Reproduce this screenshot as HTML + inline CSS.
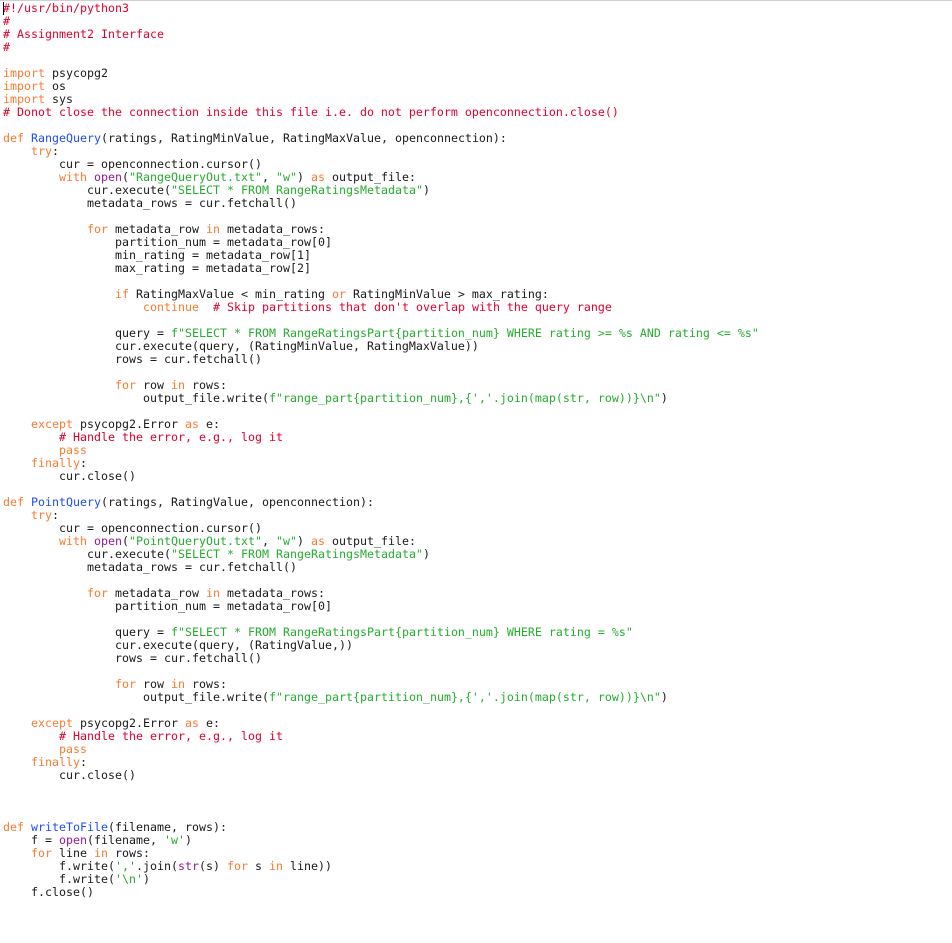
<!DOCTYPE html>
<html><head><meta charset="utf-8">
<style>
html,body{margin:0;padding:0;background:#fff;width:952px;height:943px;overflow:hidden}
#top{position:absolute;left:0;top:0;width:952px;height:1px;background:#d0d0d0}
#cur{position:absolute;left:3px;top:2px;width:1px;height:13px;background:#000}
pre{position:absolute;left:3px;top:2px;margin:0;font-family:"DejaVu Sans Mono","Liberation Mono",monospace;font-size:11.63px;line-height:13px;color:#1a1a1a;-webkit-font-smoothing:antialiased}
.c{color:#e3002c}.k{color:#fb7a30}.b{color:#96199a}.s{color:#25ad2f}.f{color:#1f4cf5}
</style></head><body>
<div id="top"></div>
<pre><span class="c">#!/usr/bin/python3
#
# Assignment2 Interface
#</span>

<span class="k">import</span> psycopg2
<span class="k">import</span> os
<span class="k">import</span> sys
<span class="c"># Donot close the connection inside this file i.e. do not perform openconnection.close()</span>

<span class="k">def</span> <span class="f">RangeQuery</span>(ratings, RatingMinValue, RatingMaxValue, openconnection):
    <span class="k">try</span>:
        cur = openconnection.cursor()
        <span class="k">with</span> <span class="b">open</span>(<span class="s">"RangeQueryOut.txt"</span>, <span class="s">"w"</span>) <span class="k">as</span> output_file:
            cur.execute(<span class="s">"SELECT * FROM RangeRatingsMetadata"</span>)
            metadata_rows = cur.fetchall()

            <span class="k">for</span> metadata_row <span class="k">in</span> metadata_rows:
                partition_num = metadata_row[0]
                min_rating = metadata_row[1]
                max_rating = metadata_row[2]

                <span class="k">if</span> RatingMaxValue &lt; min_rating <span class="k">or</span> RatingMinValue &gt; max_rating:
                    <span class="k">continue</span>  <span class="c"># Skip partitions that don't overlap with the query range</span>

                query = <span class="s">f"SELECT * FROM RangeRatingsPart{partition_num} WHERE rating &gt;= %s AND rating &lt;= %s"</span>
                cur.execute(query, (RatingMinValue, RatingMaxValue))
                rows = cur.fetchall()

                <span class="k">for</span> row <span class="k">in</span> rows:
                    output_file.write(<span class="s">f"range_part{partition_num},{','.join(map(str, row))}\n"</span>)

    <span class="k">except</span> psycopg2.Error <span class="k">as</span> e:
        <span class="c"># Handle the error, e.g., log it</span>
        <span class="k">pass</span>
    <span class="k">finally</span>:
        cur.close()

<span class="k">def</span> <span class="f">PointQuery</span>(ratings, RatingValue, openconnection):
    <span class="k">try</span>:
        cur = openconnection.cursor()
        <span class="k">with</span> <span class="b">open</span>(<span class="s">"PointQueryOut.txt"</span>, <span class="s">"w"</span>) <span class="k">as</span> output_file:
            cur.execute(<span class="s">"SELECT * FROM RangeRatingsMetadata"</span>)
            metadata_rows = cur.fetchall()

            <span class="k">for</span> metadata_row <span class="k">in</span> metadata_rows:
                partition_num = metadata_row[0]

                query = <span class="s">f"SELECT * FROM RangeRatingsPart{partition_num} WHERE rating = %s"</span>
                cur.execute(query, (RatingValue,))
                rows = cur.fetchall()

                <span class="k">for</span> row <span class="k">in</span> rows:
                    output_file.write(<span class="s">f"range_part{partition_num},{','.join(map(str, row))}\n"</span>)

    <span class="k">except</span> psycopg2.Error <span class="k">as</span> e:
        <span class="c"># Handle the error, e.g., log it</span>
        <span class="k">pass</span>
    <span class="k">finally</span>:
        cur.close()



<span class="k">def</span> <span class="f">writeToFile</span>(filename, rows):
    f = <span class="b">open</span>(filename, <span class="s">'w'</span>)
    <span class="k">for</span> line <span class="k">in</span> rows:
        f.write(<span class="s">','</span>.join(<span class="b">str</span>(s) <span class="k">for</span> s <span class="k">in</span> line))
        f.write(<span class="s">'\n'</span>)
    f.close()
</pre>
<div id="cur"></div>
</body></html>
